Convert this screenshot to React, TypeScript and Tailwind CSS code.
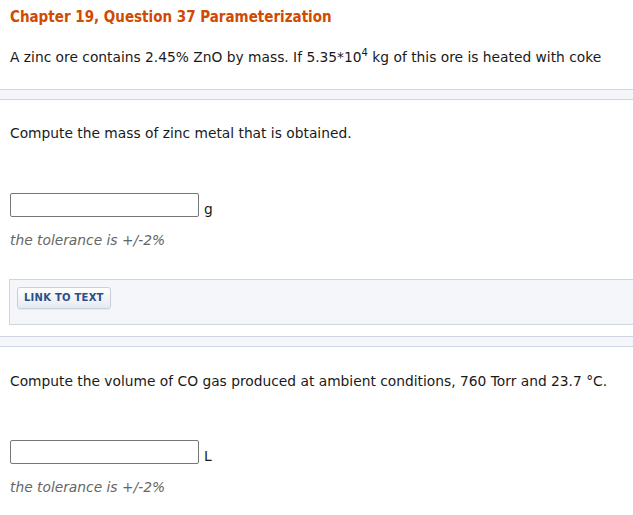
import React from 'react';

function Separator() {
  return <div className="h-[11px] border-y border-[#cfd6e0] bg-[#f4f6f9]" />;
}

function AnswerInput({ unit }: { unit: string }) {
  return (
    <div className="flex h-[24px] items-start">
      <input
        type="text"
        className="h-[24px] w-[189px] border border-[#767676] bg-white rounded-[2px] outline-none"
      />
      <span className="ml-[5px] mt-[9px] leading-[14px]">{unit}</span>
    </div>
  );
}

function Tolerance() {
  return <p className="italic text-[#666666] leading-[18px]">the tolerance is +/-2%</p>;
}

export default function App() {
  return (
    <div
      className="w-[633px] h-[515px] overflow-hidden bg-white text-[#1a1a1a] text-[13.8px]"
      style={{ fontFamily: '"DejaVu Sans", Verdana, sans-serif' }}
    >
      <div className="px-[10px] pt-[8px]">
        <h1
          className="text-[15px] font-bold text-[#d04a02] leading-[18px]"
          style={{ fontFamily: '"DejaVu Sans Condensed", Tahoma, sans-serif' }}
        >
          Chapter 19, Question 37 Parameterization
        </h1>
        <p className="mt-[22px] leading-[18px] whitespace-nowrap">
          A zinc ore contains 2.45% ZnO by mass. If 5.35*10
          <sup className="text-[10px] relative top-[-6px]">4</sup> kg of this ore is heated with coke
        </p>
      </div>
      <div className="mt-[23px]">
        <Separator />
      </div>
      <div className="px-[10px]">
        <p className="mt-[24px] leading-[18px]">Compute the mass of zinc metal that is obtained.</p>
        <div className="mt-[51px]">
          <AnswerInput unit="g" />
        </div>
        <div className="mt-[14px]">
          <Tolerance />
        </div>
      </div>
      <div className="ml-[9px] mt-[30px] h-[46px] border border-r-0 border-[#cfd6e0] bg-[#f4f6f9] pl-[7px] pt-[6px]">
        <button className="h-[22px] px-[6px] rounded-[3px] border border-[#c8d0db] bg-gradient-to-b from-white to-[#e6eaf0] text-[#2a4f8a] text-[10px] font-bold tracking-wide leading-none shadow-[0_1px_1px_rgba(0,0,0,0.05)]">
          LINK TO TEXT
        </button>
      </div>
      <div className="mt-[11px]">
        <Separator />
      </div>
      <div className="px-[10px]">
        <p className="mt-[25px] leading-[18px]">
          Compute the volume of CO gas produced at ambient conditions, 760 Torr and 23.7 °C.
        </p>
        <div className="mt-[50px]">
          <AnswerInput unit="L" />
        </div>
        <div className="mt-[14px]">
          <Tolerance />
        </div>
      </div>
    </div>
  );
}
